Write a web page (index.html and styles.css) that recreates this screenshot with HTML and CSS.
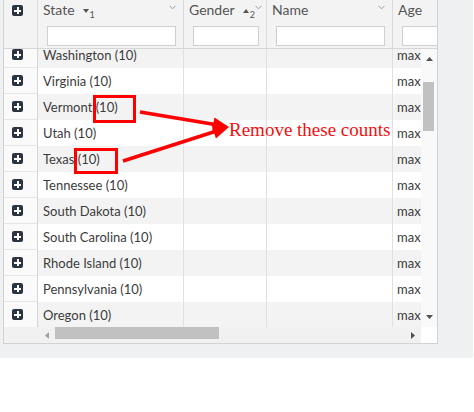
FILE: index.html
```html
<!DOCTYPE html>
<html>
<head>
<meta charset="utf-8">
<link rel="stylesheet" href="styles.css">
</head>
<body>
<div class="panel">
  <div class="grid">
    <div class="head">
      <div class="hc hexp"><span class="plus"></span></div>
      <div class="hc col-state">
        <div class="ht">
          <span class="title">State</span>
          <span class="sort"><svg class="tri" width="6" height="4" viewBox="0 0 6 4"><path d="M0 0H6L3 4Z" fill="#555"/></svg><span class="num">1</span></span>
          <svg class="chev" width="7" height="5" viewBox="0 0 7 5"><path d="M0.5 0.8L3.5 3.8L6.5 0.8" fill="none" stroke="#9a9a9a" stroke-width="1"/></svg>
        </div>
        <div class="filter"></div>
      </div>
      <div class="hc col-gender">
        <div class="ht">
          <span class="title">Gender</span>
          <span class="sort"><svg class="tri" width="6" height="4" viewBox="0 0 6 4"><path d="M0 4H6L3 0Z" fill="#555"/></svg><span class="num">2</span></span>
          <svg class="chev" width="7" height="5" viewBox="0 0 7 5"><path d="M0.5 0.8L3.5 3.8L6.5 0.8" fill="none" stroke="#9a9a9a" stroke-width="1"/></svg>
        </div>
        <div class="filter"></div>
      </div>
      <div class="hc col-name">
        <div class="ht">
          <span class="title">Name</span>
          <svg class="chev" width="7" height="5" viewBox="0 0 7 5"><path d="M0.5 0.8L3.5 3.8L6.5 0.8" fill="none" stroke="#9a9a9a" stroke-width="1"/></svg>
        </div>
        <div class="filter"></div>
      </div>
      <div class="hc col-age">
        <div class="ht"><span class="title">Age</span></div>
        <div class="filter wide"></div>
      </div>
    </div>

    <div class="body">
      <div class="pin">
        <div class="rows">
          <div class="pcell"><span class="plus"></span></div>
          <div class="pcell"><span class="plus"></span></div>
          <div class="pcell"><span class="plus"></span></div>
          <div class="pcell"><span class="plus"></span></div>
          <div class="pcell"><span class="plus"></span></div>
          <div class="pcell"><span class="plus"></span></div>
          <div class="pcell"><span class="plus"></span></div>
          <div class="pcell"><span class="plus"></span></div>
          <div class="pcell"><span class="plus"></span></div>
          <div class="pcell"><span class="plus"></span></div>
          <div class="pcell"><span class="plus"></span></div>
        </div>
      </div>
      <div class="view">
        <div class="rows">
          <div class="row"><div class="c col-state">Washington (10)</div><div class="c col-gender"></div><div class="c col-name"></div><div class="c col-age">max</div></div>
          <div class="row"><div class="c col-state">Virginia (10)</div><div class="c col-gender"></div><div class="c col-name"></div><div class="c col-age">max</div></div>
          <div class="row"><div class="c col-state">Vermont (10)</div><div class="c col-gender"></div><div class="c col-name"></div><div class="c col-age">max</div></div>
          <div class="row"><div class="c col-state">Utah (10)</div><div class="c col-gender"></div><div class="c col-name"></div><div class="c col-age">max</div></div>
          <div class="row"><div class="c col-state">Texas (10)</div><div class="c col-gender"></div><div class="c col-name"></div><div class="c col-age">max</div></div>
          <div class="row"><div class="c col-state">Tennessee (10)</div><div class="c col-gender"></div><div class="c col-name"></div><div class="c col-age">max</div></div>
          <div class="row"><div class="c col-state">South Dakota (10)</div><div class="c col-gender"></div><div class="c col-name"></div><div class="c col-age">max</div></div>
          <div class="row"><div class="c col-state">South Carolina (10)</div><div class="c col-gender"></div><div class="c col-name"></div><div class="c col-age">max</div></div>
          <div class="row"><div class="c col-state">Rhode Island (10)</div><div class="c col-gender"></div><div class="c col-name"></div><div class="c col-age">max</div></div>
          <div class="row"><div class="c col-state">Pennsylvania (10)</div><div class="c col-gender"></div><div class="c col-name"></div><div class="c col-age">max</div></div>
          <div class="row"><div class="c col-state">Oregon (10)</div><div class="c col-gender"></div><div class="c col-name"></div><div class="c col-age">max</div></div>
        </div>
      </div>
      <div class="vscroll">
        <div class="sbtn"><svg width="7" height="4" viewBox="0 0 7 4"><path d="M0 4H7L3.5 0Z" fill="#505050"/></svg></div>
        <div class="vtrack"><div class="vthumb"></div></div>
        <div class="sbtn down"><svg width="7" height="4" viewBox="0 0 7 4"><path d="M0 0H7L3.5 4Z" fill="#505050"/></svg></div>
      </div>
    </div>

    <div class="foot">
      <div class="pinfoot"></div>
      <div class="hscroll">
        <div class="hbtn"><svg width="4" height="7" viewBox="0 0 4 7"><path d="M4 0V7L0 3.5Z" fill="#a0a0a0"/></svg></div>
        <div class="htrack"><div class="hthumb"></div></div>
        <div class="hbtn"><svg width="4" height="7" viewBox="0 0 4 7"><path d="M0 0V7L4 3.5Z" fill="#505050"/></svg></div>
      </div>
      <div class="corner"></div>
    </div>
  </div>
</div>

<svg class="annot" width="474" height="412" viewBox="0 0 474 412">
  <rect x="94.5" y="96.5" width="40" height="25" fill="none" stroke="#f00" stroke-width="3"/>
  <rect x="75.5" y="149.5" width="41" height="23" fill="none" stroke="#f00" stroke-width="3"/>
  <line x1="140" y1="112" x2="215" y2="124.6" stroke="#f00" stroke-width="3.5"/>
  <line x1="123" y1="161" x2="215" y2="131.5" stroke="#f00" stroke-width="3.5"/>
  <path d="M229 127L214.4 117.4L212.1 131.2Z" fill="#f00"/>
  <path d="M229 127L211.7 125.2L215.9 138.6Z" fill="#f00"/>
</svg>
<div class="note">Remove these counts</div>
</body>
</html>
```

FILE: styles.css
```css
* { box-sizing: border-box; }

body {
  margin: 0;
  background: #ffffff;
  font-family: Lato, "Open Sans", "Liberation Sans", sans-serif;
  position: relative;
}

.panel {
  width: 473px;
  height: 358px;
  background: #eef0f2;
  padding-left: 3px;
}

.grid {
  width: 435px;
  height: 344px;
  background: #ffffff;
  border: 1px solid #d2d2d2;
  border-top: 0;
  display: flex;
  flex-direction: column;
  overflow: hidden;
}

/* header */
.head {
  flex: none;
  height: 49px;
  display: flex;
  background: #f3f3f3;
  border-bottom: 1px solid #d6d6d6;
}

.hc {
  flex: none;
  display: flex;
  flex-direction: column;
  border-right: 1px solid #dadada;
  padding-right: 7px;
}

.hexp {
  width: 34px;
  padding: 5px 0 0 8px;
}

.col-state { width: 146px; }
.col-gender { width: 83px; }
.col-name { width: 126px; }
.col-age { flex: 1; min-width: 0; border-right: 0; overflow: hidden; }
.hc.col-age { padding-right: 0; }

.ht {
  height: 20px;
  display: flex;
  align-items: flex-start;
  padding-left: 5px;
}

.title {
  font-size: 14px;
  line-height: 20px;
  color: #555555;
  white-space: nowrap;
}

.sort {
  display: flex;
  align-items: flex-start;
  margin-left: 8px;
}

.tri { margin-top: 9px; }

.num {
  font-size: 9px;
  line-height: 9px;
  color: #555555;
  margin-top: 10px;
  margin-left: 1px;
}

.chev {
  margin-left: auto;
  margin-top: 5px;
  flex: none;
}

.filter {
  margin: 6px 0 0 9px;
  height: 20px;
  background: #ffffff;
  border: 1px solid #cfcfcf;
}

.filter.wide { width: 60px; flex: none; }

.plus {
  display: block;
  width: 11px;
  height: 11px;
  border-radius: 2px;
  background:
    linear-gradient(#fff, #fff) center / 7px 2px no-repeat,
    linear-gradient(#fff, #fff) center / 2px 7px no-repeat,
    #2b3541;
}

/* body */
.body {
  flex: none;
  height: 278px;
  display: flex;
}

.rows { margin-top: -7px; }

.pin {
  flex: none;
  width: 34px;
  border-right: 1px solid #d6d6d6;
  overflow: hidden;
}

.pcell {
  height: 26px;
  padding: 7px 0 0 8px;
  border-bottom: 1px solid #e6e6e6;
  background: #fafafa;
}

.view {
  flex: 1;
  min-width: 0;
  overflow: hidden;
}

.row {
  height: 26px;
  display: flex;
  background: #ffffff;
}

.row:nth-child(odd) { background: #f3f3f3; }

.c {
  flex: none;
  height: 26px;
  border-right: 1px solid #e0e0e0;
  font-size: 13px;
  line-height: 26px;
  color: #3c3c3c;
  padding-left: 5px;
  white-space: nowrap;
}

.c.col-age { flex: 1; border-right: 0; padding-left: 4px; }

.vscroll {
  flex: none;
  width: 16px;
  background: #f9f9f9;
  display: flex;
  flex-direction: column;
}

.sbtn {
  height: 17px;
  display: flex;
  align-items: center;
  justify-content: center;
  padding-top: 2px;
}

.sbtn.down { padding-top: 0; padding-bottom: 4px; }

.vtrack { flex: 1; padding: 16px 3px 0 2px; }

.vthumb {
  height: 49px;
  background: #c1c1c1;
}

/* footer / horizontal scroll */
.foot {
  flex: none;
  height: 16px;
  display: flex;
}

.pinfoot {
  flex: none;
  width: 34px;
  background: #f1f1f1;
}

.hscroll {
  flex: 1;
  display: flex;
  background: #f1f1f1;
}

.hbtn {
  flex: none;
  width: 17px;
  display: flex;
  align-items: center;
  justify-content: center;
  padding-top: 0;
}

.htrack { flex: 1; padding-top: 0; }

.hthumb {
  width: 164px;
  height: 12px;
  background: #c1c1c1;
}

.corner {
  flex: none;
  width: 16px;
  background: #ffffff;
}

/* annotation overlay */
.annot {
  position: absolute;
  left: 0;
  top: 0;
  pointer-events: none;
}

.note {
  position: absolute;
  left: 229px;
  top: 120px;
  font-family: "Liberation Serif", "Times New Roman", serif;
  font-size: 19px;
  line-height: 19px;
  color: #f01010;
  white-space: nowrap;
}
```
